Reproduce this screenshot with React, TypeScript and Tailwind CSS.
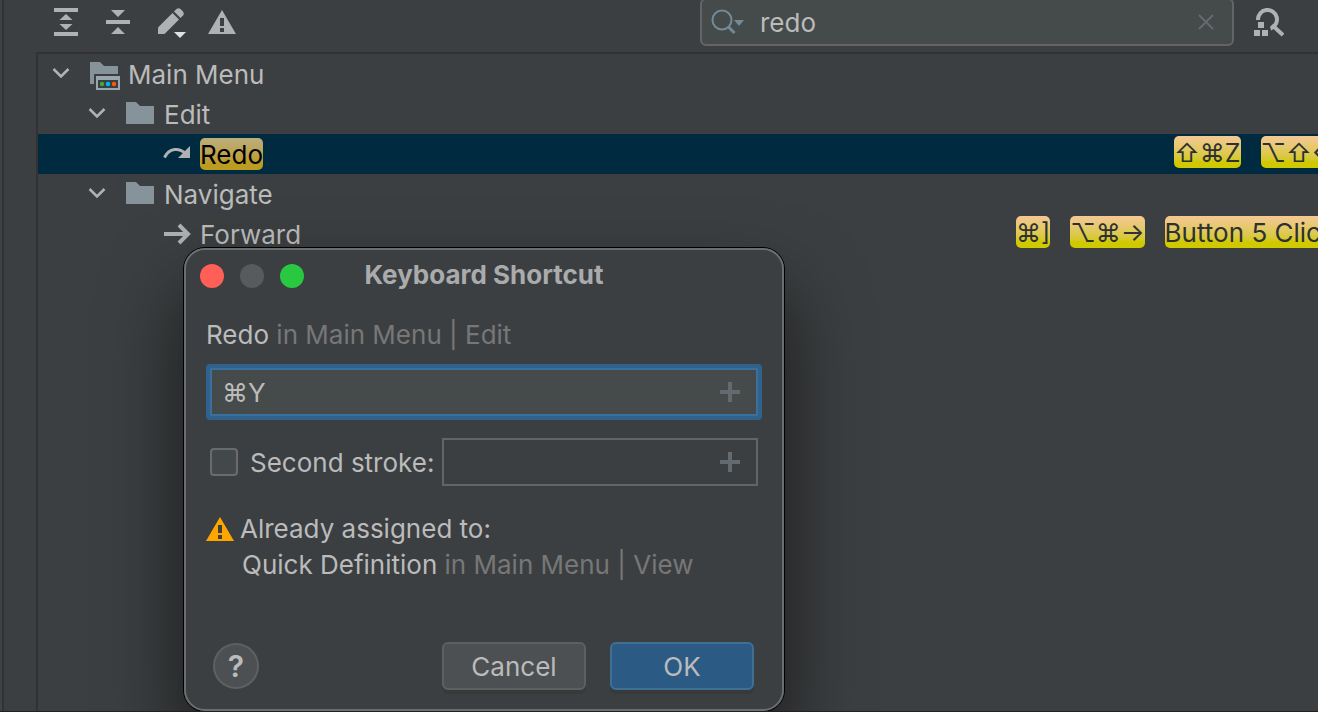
import { useState } from 'react';
import type { ReactNode } from 'react';

type TreeRow = {
  label: string;
  level: 0 | 1 | 2;
  icon: ReactNode;
  selected?: boolean;
  shortcuts?: string[];
};

const ExpandAllIcon = () => (
  <svg viewBox="0 0 32 44" className="h-11 w-8 fill-[#afb1b3]">
    <path d="M4 8h24v4H4zM4 32h24v4H4zM16 14l6.5 6h-13zM16 30l6.5-6h-13z" />
  </svg>
);

const CollapseAllIcon = () => (
  <svg viewBox="0 0 32 44" className="h-11 w-8 fill-[#afb1b3]">
    <path d="M4 20h24v4H4zM9 10h14l-7 7zM9 34h14l-7-7z" />
  </svg>
);

const EditIcon = () => (
  <svg viewBox="0 0 32 44" className="h-11 w-8 fill-[#afb1b3]">
    <path d="M4 34v-6.500L18.500 13l6.500 6.500L10.500 34z" />
    <path d="M20 11.500l2.500-2.500q2-1.600 4 0l2.500 2.500q1.500 2 0 4L26.500 18z" />
    <path d="M20 32h12l-6 6z" fill="#dfe1e5" />
  </svg>
);

const ConflictsIcon = () => (
  <svg viewBox="0 0 32 44" className="h-11 w-8 fill-[#afb1b3]">
    <path fillRule="evenodd" d="M16 10l14 24H2zM14 18v8h4v-8zM14 28v4h4v-4z" />
  </svg>
);

const FindByShortcutIcon = () => (
  <svg viewBox="0 0 32 44" className="h-11 w-8 fill-[#afb1b3]">
    <path d="M6 20a9.500 9.500 0 1 1 12.500 8.500" fill="none" stroke="#afb1b3" strokeWidth="4" />
    <path d="M20 25l11 10" fill="none" stroke="#afb1b3" strokeWidth="4" />
    <path d="M6 22h6v6H6zM2 30h6v6H2zM10 30h6v6h-6z" />
  </svg>
);

const SearchIcon = () => (
  <svg viewBox="0 0 34 28" className="h-7 w-[34px] shrink-0">
    <circle cx="12" cy="12" r="9.500" fill="none" stroke="#748a96" strokeWidth="2" />
    <path d="M18.500 19l6 6" stroke="#748a96" strokeWidth="3" />
    <path d="M24 12h10l-5 6z" fill="#748a96" />
  </svg>
);

const ClearIcon = () => (
  <svg viewBox="0 0 16 16" className="size-4">
    <path d="M1 1l14 14M15 1L1 15" stroke="#616b72" strokeWidth="2" />
  </svg>
);

const ChevronIcon = () => (
  <svg viewBox="0 0 20 20" className="w-5 shrink-0">
    <path d="M1.500 5l7.500 7.500L16.500 5" fill="none" stroke="#afb1b3" strokeWidth="2.500" />
  </svg>
);

const FolderIcon = () => (
  <svg viewBox="0 0 32 28" className="w-8 shrink-0 fill-[#87939a]">
    <path d="M0 2h10l4 4h14v18H0z" />
  </svg>
);

const MenuFolderIcon = () => (
  <svg viewBox="0 0 32 32" className="w-8 shrink-0">
    <path d="M0 4h10l4 4h14v8H4v10H0z" fill="#87939a" />
    <path fillRule="evenodd" d="M6 18h24v14H6zM8 22v8h20v-8z" fill="#9aa7b0" />
    <circle cx="12" cy="26" r="2.200" fill="#3fae2a" />
    <circle cx="18" cy="26" r="2.200" fill="#00b8f0" />
    <circle cx="24" cy="26" r="2.200" fill="#ff5a00" />
  </svg>
);

const RedoIcon = () => (
  <svg viewBox="0 0 32 28" className="w-8 shrink-0">
    <path d="M2.500 17.500C7 8 17 7 24 14" fill="none" stroke="#afb1b3" strokeWidth="3" />
    <path d="M28 6v12H16z" fill="#afb1b3" />
  </svg>
);

const ForwardIcon = () => (
  <svg viewBox="0 0 32 28" className="w-8 shrink-0">
    <path d="M2 14h24M17 5l9 9-9 9" fill="none" stroke="#afb1b3" strokeWidth="4" />
  </svg>
);

const PlusIcon = () => (
  <svg viewBox="0 0 20 20" className="size-5">
    <path d="M8 0h4v8h8v4h-8v8H8v-8H0V8h8z" fill="#636b70" />
  </svg>
);

const WarningIcon = () => (
  <svg viewBox="0 0 28 24" className="w-7 shrink-0">
    <path fillRule="evenodd" d="M14 0l14 24H0zM12 8v8h4V8zM12 18v4h4v-4z" fill="#ffa500" />
  </svg>
);

const rows: TreeRow[] = [
  { label: 'Main Menu', level: 0, icon: <MenuFolderIcon /> },
  { label: 'Edit', level: 1, icon: <FolderIcon /> },
  { label: 'Redo', level: 2, icon: <RedoIcon />, selected: true, shortcuts: ['⇧⌘Z', '⌥⇧⌫'] },
  { label: 'Navigate', level: 1, icon: <FolderIcon /> },
  { label: 'Forward', level: 2, icon: <ForwardIcon />, shortcuts: ['⌘]', '⌥⌘→', 'Button 5 Click'] },
];

const indent = { 0: 'pl-[14px]', 1: 'pl-[50px]', 2: 'pl-[124px]' };

function Tree() {
  return (
    <ul className="min-h-0 flex-1 border-t-2 border-l-2 border-[#323232]">
      {rows.map((row) => (
        <li
          key={row.label}
          className={`flex h-10 items-center overflow-hidden leading-[30px] ${indent[row.level]} ${row.selected ? 'bg-[#002a40]' : ''}`}
        >
          {row.level < 2 && (
            <button aria-label={`Collapse ${row.label}`} className="mr-[18px]">
              <ChevronIcon />
            </button>
          )}
          {row.icon}
          {row.selected ? (
            <span className="ml-1.5 rounded-[5px] bg-linear-to-b from-[#bcae7c] to-[#bc9c20] to-80% pt-0.5 text-black">{row.label}</span>
          ) : (
            <span className="ml-1.5 pt-0.5">{row.label}</span>
          )}
          {row.shortcuts && (
            <div className={`ml-auto flex shrink-0 gap-5 pb-1 whitespace-nowrap ${row.selected ? 'w-36' : 'w-[302px]'}`}>
              {row.shortcuts.map((keys) => (
                <kbd
                  key={keys}
                  className={`shrink-0 rounded-[5px] bg-linear-to-b from-[#f5c894] to-[#d1c900] to-80% pt-0.5 font-[Inter,sans-serif] text-[#2f3032] ${keys.startsWith('Button') ? '' : 'text-[25px]'}`}
                >
                  {keys}
                </kbd>
              ))}
            </div>
          )}
        </li>
      ))}
    </ul>
  );
}

function ShortcutDialog() {
  const [second, setSecond] = useState(false);

  return (
    <section
      role="dialog"
      aria-labelledby="dialog-title"
      className="absolute top-[247px] left-[183px] flex w-[602px] flex-col rounded-[22px] border border-black bg-[#3c3f41] shadow-[0_44px_80px_rgba(0,0,0,0.6)]"
    >
      <div className="flex flex-col rounded-[21px] border-2 border-[#6b6d6e] px-5 pb-[19px]">
        <header className="-mx-1.5 flex h-[52px] items-center gap-4">
          <button aria-label="Close" className="size-6 rounded-full bg-[#ff5f57]" />
          <button aria-label="Minimize" className="size-6 rounded-full bg-[#585b5d]" />
          <button aria-label="Zoom" className="size-6 rounded-full bg-[#28c840]" />
          <h1 id="dialog-title" className="mr-30 flex-1 pb-0.5 text-center font-bold text-[#a9abad]">Keyboard Shortcut</h1>
        </header>

        <p className="mt-[17px] text-[#777777]">
          <span className="text-[#bbbbbb]">Redo</span> in Main Menu | Edit
        </p>

        <div className="mt-[13px] flex h-14 items-center rounded-sm border-4 border-[#30628c] bg-[#454a4a]">
          <div className="flex h-12 flex-1 items-center border-2 border-[#3b6f9e] pr-4 pl-2.5">
            <input aria-label="First stroke" defaultValue="⌘Y" className="min-w-0 flex-1 pt-0.5 outline-none" />
            <button aria-label="Add first stroke key"><PlusIcon /></button>
          </div>
        </div>

        <div className="mt-[18px] flex items-center px-1">
          <input
            id="second"
            type="checkbox"
            checked={second}
            onChange={() => setSecond(!second)}
            className="size-7 shrink-0 appearance-none rounded-sm border-2 border-[#6b6b6b] bg-[#43494a]"
          />
          <label htmlFor="second" className="w-[204px] shrink-0 pt-0.5 pl-3 whitespace-nowrap">Second stroke:</label>
          <div className="flex h-12 min-w-0 flex-1 items-center border-2 border-[#646464] pr-4 pl-2.5">
            <input aria-label="Second stroke keys" disabled={!second} className="min-w-0 flex-1 outline-none" />
            <button aria-label="Add second stroke key"><PlusIcon /></button>
          </div>
        </div>

        <div className="mt-[25px] leading-9">
          <p className="flex items-center gap-1.5"><WarningIcon />Already assigned to:</p>
          <p className="pl-9 text-[#777777]">
            <span className="text-[#bbbbbb]">Quick Definition</span> in Main Menu | View
          </p>
        </div>

        <footer className="mt-[59px] flex items-center gap-6 pr-2 pl-[7px]">
          <button aria-label="Help" className="mr-auto size-[46px] rounded-full border-2 border-[#5e6060] bg-[#4c5052] text-[30px] font-semibold">?</button>
          <button className="h-12 w-36 rounded-md border-2 border-[#5e6060] bg-[#4c5052] pt-0.5 shadow-[0_4px_0_#37393b]">Cancel</button>
          <button className="h-12 w-36 rounded-md border-2 border-[#3d7093] bg-[#2b5a85] pt-0.5 shadow-[0_4px_0_#37393b]">OK</button>
        </footer>
      </div>
    </section>
  );
}

export default function App() {
  return (
    <main className="relative flex h-screen overflow-hidden border-b border-[#251f24] bg-[#3c3f41] font-[Inter,sans-serif] text-[26px] leading-8 text-[#bbbbbb]">
      <div className="w-1 shrink-0 border-r-2 border-[#323232] bg-[#3c434b]" />
      <div className="flex min-w-0 flex-1 flex-col pl-8">
        <div className="flex h-[52px] shrink-0 items-center pr-[34px] pb-2 pl-3.5">
          <div className="flex gap-5">
            <button aria-label="Expand All"><ExpandAllIcon /></button>
            <button aria-label="Collapse All"><CollapseAllIcon /></button>
            <button aria-label="Edit Shortcut"><EditIcon /></button>
            <button aria-label="Show Conflicts"><ConflictsIcon /></button>
          </div>
          <div className="mr-[18px] ml-auto flex h-12 w-[534px] shrink-0 items-center rounded-md border-2 border-[#646464] bg-[#454a4a] pr-[18px] pl-2">
            <SearchIcon />
            <input aria-label="Search actions" defaultValue="redo" className="ml-4 min-w-0 flex-1 pt-0.5 outline-none" />
            <button aria-label="Clear search"><ClearIcon /></button>
          </div>
          <button aria-label="Find Actions by Shortcut"><FindByShortcutIcon /></button>
        </div>
        <Tree />
      </div>
      <ShortcutDialog />
    </main>
  );
}
